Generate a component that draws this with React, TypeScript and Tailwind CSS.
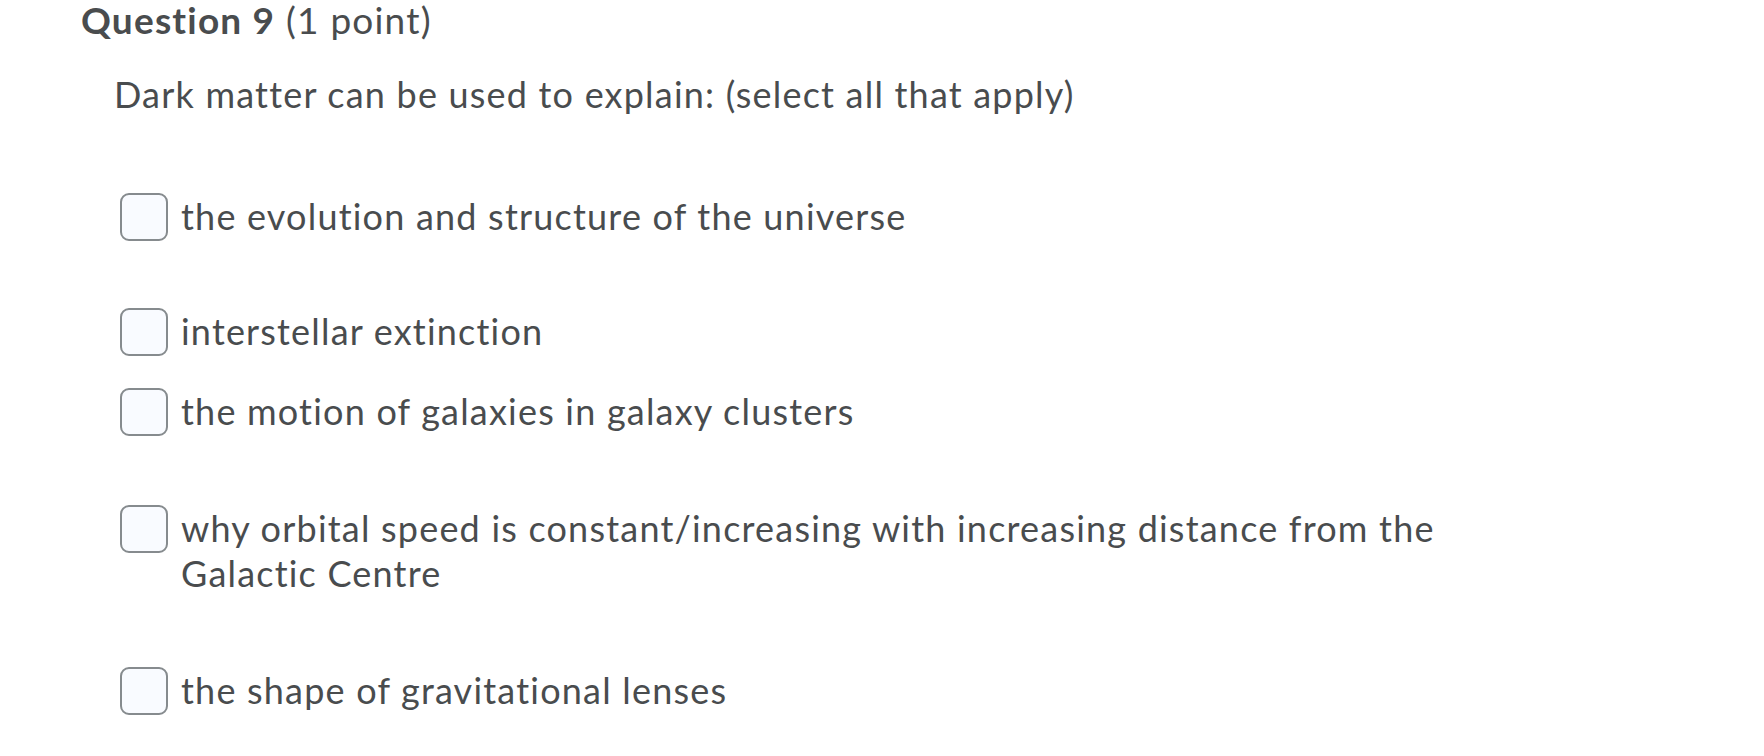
import React from "react";

const options: { label: string; gap: string }[] = [
  { label: "the evolution and structure of the universe", gap: "mt-0" },
  { label: "interstellar extinction", gap: "mt-[70px]" },
  { label: "the motion of galaxies in galaxy clusters", gap: "mt-[35px]" },
  {
    label:
      "why orbital speed is constant/increasing with increasing distance from the Galactic Centre",
    gap: "mt-[72px]",
  },
  { label: "the shape of gravitational lenses", gap: "mt-[72px]" },
];

function Checkbox() {
  return (
    <span className="mt-[-1px] mb-[-2px] block h-[48px] w-[48px] shrink-0 rounded-[9px] border-2 border-[#868b8e] bg-[#f9fbff]" />
  );
}

export default function App() {
  return (
    <div className="min-h-screen bg-white font-['Lato','Liberation_Sans',sans-serif] text-[#494c4e] tracking-[1.2px] [font-variant-ligatures:none]">
      <div className="pl-[81px]">
        <h2 className="text-[37px] leading-[40px]">
          <span className="font-bold">Question 9</span> (1 point)
        </h2>
      </div>

      <div className="pl-[114px] pt-[32px]">
        <p className="text-[36px] leading-[45px]">
          Dark matter can be used to explain: (select all that apply)
        </p>
      </div>

      <div className="mt-[77px] flex flex-col pl-[120px]">
        {options.map((o) => (
          <label key={o.label} className={`flex items-start gap-[13px] ${o.gap}`}>
            <Checkbox />
            <span className="w-[1320px] text-[36px] leading-[45px]">{o.label}</span>
          </label>
        ))}
      </div>
    </div>
  );
}
